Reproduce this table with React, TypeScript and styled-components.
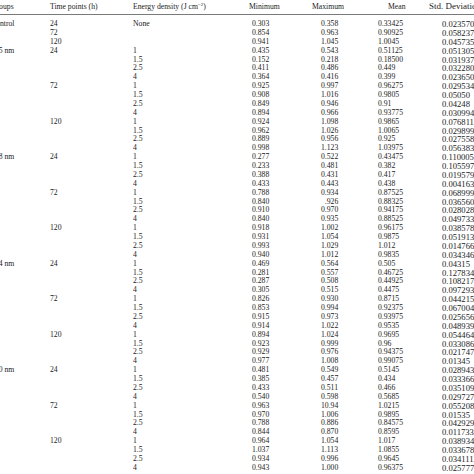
import React from 'react';
import styled, { createGlobalStyle } from 'styled-components';

const Global = createGlobalStyle`
  html, body {
    margin: 0;
    padding: 0;
    background: #ffffff;
    overflow: hidden;
  }
`;

const Page = styled.div`
  width: 474px;
  height: 474px;
  overflow: hidden;
`;

const Table = styled.table`
  border-collapse: collapse;
  table-layout: fixed;
  width: 571px;
  margin-left: -9px;
  font-family: 'Liberation Serif', 'Times New Roman', serif;
  font-size: 7.7px;
  color: #222222;
`;

const Head = styled.th<{ $indent?: number; $size?: number }>`
  text-align: left;
  font-weight: normal;
  padding: 2px 0 3px;
  line-height: 9px;
  white-space: nowrap;
  border-bottom: 1px solid #7a7a7a;
  font-size: ${(p) => p.$size ?? 7.7}px;
  text-indent: ${(p) => p.$indent ?? 0}px;
  sup {
    font-size: 5px;
    line-height: 0;
    vertical-align: 3px;
  }
`;

const Row = styled.tr`
  &:first-child > td {
    padding-top: 5px;
  }
`;

const Cell = styled.td<{ $size?: number }>`
  padding: 0;
  height: 8.88px;
  line-height: 8.88px;
  white-space: nowrap;
  vertical-align: middle;
  font-size: ${(p) => p.$size ?? 7.7}px;
`;

type Entry = [string, string, string, string, string, string, string];

const rows: Entry[] = [
  ['Control', '24', 'None', '0.303', '0.358', '0.33425', '0.023570'],
  ['', '72', '', '0.854', '0.963', '0.90925', '0.0582377'],
  ['', '120', '', '0.941', '1.045', '1.0045', '0.0457355'],
  ['635 nm', '24', '1', '0.435', '0.543', '0.51125', '0.0513052'],
  ['', '', '1.5', '0.152', '0.218', '0.18500', '0.0319374'],
  ['', '', '2.5', '0.411', '0.486', '0.449', '0.0322800'],
  ['', '', '4', '0.364', '0.416', '0.399', '0.0236505'],
  ['', '72', '1', '0.925', '0.997', '0.96275', '0.0295340'],
  ['', '', '1.5', '0.908', '1.016', '0.9805', '0.05050'],
  ['', '', '2.5', '0.849', '0.946', '0.91', '0.04248'],
  ['', '', '4', '0.894', '0.966', '0.93775', '0.0309942'],
  ['', '120', '1', '0.924', '1.098', '0.9865', '0.0768114'],
  ['', '', '1.5', '0.962', '1.026', '1.0065', '0.0298994'],
  ['', '', '2.5', '0.889', '0.956', '0.925', '0.0275580'],
  ['', '', '4', '0.998', '1.123', '1.03975', '0.0563832'],
  ['808 nm', '24', '1', '0.277', '0.522', '0.43475', '0.1100052'],
  ['', '', '1.5', '0.233', '0.481', '0.382', '0.1055977'],
  ['', '', '2.5', '0.388', '0.431', '0.417', '0.0195796'],
  ['', '', '4', '0.433', '0.443', '0.438', '0.0041633'],
  ['', '72', '1', '0.788', '0.934', '0.87525', '0.0689995'],
  ['', '', '1.5', '0.840', '\u2007.926', '0.88325', '0.0365604'],
  ['', '', '2.5', '0.910', '0.970', '0.94175', '0.0280280'],
  ['', '', '4', '0.840', '0.935', '0.88525', '0.0497333'],
  ['', '120', '1', '0.918', '1.002', '0.96175', '0.0385780'],
  ['', '', '1.5', '0.931', '1.054', '0.9875', '0.0519132'],
  ['', '', '2.5', '0.993', '1.029', '1.012', '0.0147663'],
  ['', '', '4', '0.940', '1.012', '0.9835', '0.0343463'],
  ['904 nm', '24', '1', '0.469', '0.564', '0.505', '0.04315'],
  ['', '', '1.5', '0.281', '0.557', '0.46725', '0.1278340'],
  ['', '', '2.5', '0.287', '0.508', '0.44925', '0.1082177'],
  ['', '', '4', '0.305', '0.515', '0.4475', '0.0972932'],
  ['', '72', '1', '0.826', '0.930', '0.8715', '0.0442152'],
  ['', '', '1.5', '0.853', '0.994', '0.92375', '0.0670040'],
  ['', '', '2.5', '0.915', '0.973', '0.93975', '0.0256560'],
  ['', '', '4', '0.914', '1.022', '0.9535', '0.0489394'],
  ['', '120', '1', '0.894', '1.024', '0.9695', '0.0544640'],
  ['', '', '1.5', '0.923', '0.999', '0.96', '0.0330860'],
  ['', '', '2.5', '0.929', '0.976', '0.94375', '0.0217477'],
  ['', '', '4', '0.977', '1.008', '0.99075', '0.01345'],
  ['980 nm', '24', '1', '0.481', '0.549', '0.5145', '0.0289432'],
  ['', '', '1.5', '0.385', '0.457', '0.434', '0.0333667'],
  ['', '', '2.5', '0.433', '0.511', '0.466', '0.0351095'],
  ['', '', '4', '0.540', '0.598', '0.5685', '0.0297277'],
  ['', '72', '1', '0.963', '10.94', '1.0215', '0.0552080'],
  ['', '', '1.5', '0.970', '1.006', '0.9895', '0.01535'],
  ['', '', '2.5', '0.788', '0.886', '0.84575', '0.0429290'],
  ['', '', '4', '0.844', '0.870', '0.8595', '0.0117332'],
  ['', '120', '1', '0.964', '1.054', '1.017', '0.0389346'],
  ['', '', '1.5', '1.037', '1.113', '1.0855', '0.0336780'],
  ['', '', '2.5', '0.934', '0.996', '0.9645', '0.0341112'],
  ['', '', '4', '0.943', '1.000', '0.96375', '0.0257772'],
];

const widths = [59, 83, 119, 69, 57, 64, 120];

export default function App() {
  return (
    <Page>
      <Global />
      <Table>
        <colgroup>
          {widths.map((w, i) => (
            <col key={i} style={{ width: w }} />
          ))}
        </colgroup>
        <thead>
          <tr>
            <Head>Groups</Head>
            <Head>Time points (h)</Head>
            <Head>
              Energy density (J cm<sup>−2</sup>)
            </Head>
            <Head $indent={-3}>Minimum</Head>
            <Head $indent={-9}>Maximum</Head>
            <Head $indent={10}>Mean</Head>
            <Head $indent={-13} $size={9}>
              Std. Deviation
            </Head>
          </tr>
        </thead>
        <tbody>
          {rows.map((r, i) => (
            <Row key={i}>
              {r.map((c, j) => (
                <Cell key={j} $size={j === 6 ? 8.6 : undefined}>
                  {c}
                </Cell>
              ))}
            </Row>
          ))}
        </tbody>
      </Table>
    </Page>
  );
}
